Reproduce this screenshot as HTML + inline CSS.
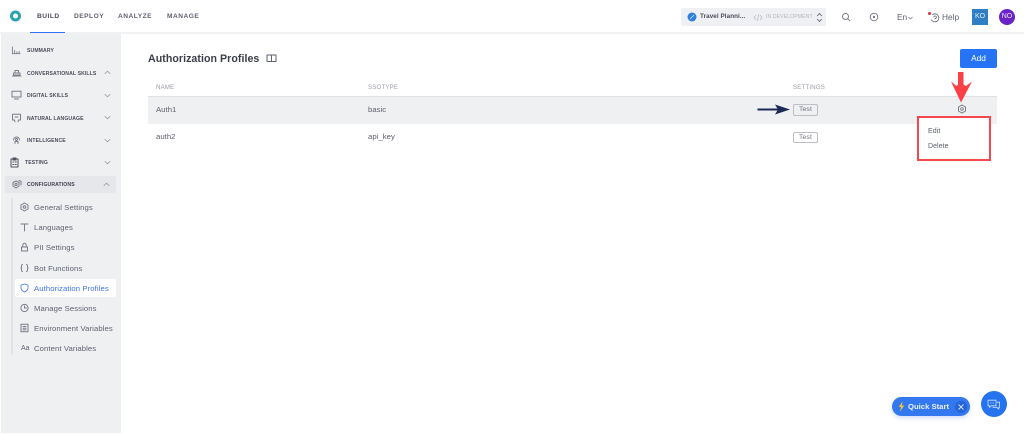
<!DOCTYPE html>
<html lang="en">
<head>
<meta charset="utf-8">
<title>Authorization Profiles</title>
<style>
html,body{margin:0;padding:0;background:#fff}
#p{position:relative;width:1024px;height:434px;overflow:hidden;background:#fff;font-family:"Liberation Sans",sans-serif;color:#3f4250;filter:blur(.3px)}
#p div,#p svg{position:absolute}
.t{white-space:nowrap;line-height:12px}
.nav{top:11px;font-size:6.6px;font-weight:bold;letter-spacing:.5px;color:#5f6270}
.sec{left:27px;font-size:5.1px;font-weight:bold;color:#4a4d5a;letter-spacing:.12px}
.sub{left:34px;font-size:7.7px;color:#5f6270;letter-spacing:.1px}
.hd{top:81.5px;font-size:6.1px;color:#9a9ca6;letter-spacing:.2px}
.cell{font-size:7.7px;color:#5c5f6b;letter-spacing:.05px}
.ic{fill:none;stroke:#7a7d8a;stroke-width:1;stroke-linecap:round;stroke-linejoin:round}
.btn{left:793px;width:23px;height:9.5px;border:1px solid #bcbec4;border-radius:2px;font-size:6.8px;line-height:9.5px;text-align:center;color:#6d7080;letter-spacing:.15px}
</style>
</head>
<body>
<div id="p">
  <!-- header -->
  <div style="left:0;top:32px;width:1024px;height:2px;background:#f1f2f4"></div>
  <svg style="left:9px;top:9px" width="14" height="14" viewBox="0 0 14 14"><circle cx="6.5" cy="7" r="4" fill="none" stroke="#2aa3ac" stroke-width="3"/></svg>
  <div class="t nav" style="left:37px;color:#4a4d5a">BUILD</div>
  <div class="t nav" style="left:74px">DEPLOY</div>
  <div class="t nav" style="left:118px">ANALYZE</div>
  <div class="t nav" style="left:167px">MANAGE</div>
  <div style="left:30px;top:32px;width:35px;height:1px;background:#2f73f0"></div>

  <div style="left:681px;top:8px;width:145px;height:18px;background:#eff0f3;border-radius:2px"></div>
  <svg style="left:687px;top:12px" width="10" height="10" viewBox="0 0 10 10"><circle cx="5" cy="5" r="4.5" fill="#2f7fdc"/><path d="M3 7 7 3" stroke="#cfe3fa" stroke-width=".8"/></svg>
  <div class="t" style="left:700px;top:11px;font-size:6.3px;font-weight:bold;color:#4a4d5a;letter-spacing:.08px">Travel Planni...</div>
  <svg style="left:753px;top:13px" width="10" height="9" viewBox="0 0 10 9"><path d="M3 2 1 4.5 3 7M7 2 9 4.5 7 7M5.8 1 4.2 8" fill="none" stroke="#b9bbc3" stroke-width=".7"/></svg>
  <div class="t" style="left:766px;top:11px;font-size:5.1px;color:#b3b5bc;letter-spacing:.12px">IN DEVELOPMENT</div>
  <svg style="left:815.5px;top:12px" width="7" height="11" viewBox="0 0 7 11"><path d="M1.2 4 3.5 1.500 5.800 4M1.200 7 3.500 9.500 5.800 7" fill="none" stroke="#5f6270" stroke-width=".9"/></svg>
  <svg style="left:841px;top:12px" width="10" height="10" viewBox="0 0 10 10"><circle cx="4.500" cy="4.500" r="3" class="ic"/><path d="M6.800 6.800 8.800 8.800" class="ic"/></svg>
  <svg style="left:869px;top:12px" width="10" height="10" viewBox="0 0 10 10"><circle cx="5" cy="5" r="3.800" class="ic"/><circle cx="5" cy="5" r="1.100" fill="#6d7080"/></svg>
  <div class="t" style="left:897px;top:11px;font-size:8.300px;color:#5f6270">En</div>
  <svg style="left:908px;top:16px" width="5" height="4" viewBox="0 0 5 4"><path d="M.5 1 2.500 3 4.500 1" fill="none" stroke="#6d7080" stroke-width=".7"/></svg>
  <div style="left:928px;top:12px;width:3px;height:3px;border-radius:50%;background:#e0303a"></div>
  <svg style="left:930px;top:12.500px" width="10" height="10" viewBox="0 0 10 10"><path d="M2 2A4 4 0 1 1 1.200 6.500" fill="none" stroke="#5f6270" stroke-width=".8"/><path d="M3.800 4A1.300 1.300 0 1 1 5 5.500V6.200M5 7.400V7.500" fill="none" stroke="#5f6270" stroke-width=".7"/></svg>
  <div class="t" style="left:942px;top:11px;font-size:8.300px;color:#5f6270">Help</div>
  <div style="left:972px;top:9px;width:16px;height:16px;background:#2f7fc4;color:#e6f0fa;font-size:7px;line-height:16px;text-align:center">KO</div>
  <div style="left:999px;top:9px;width:16px;height:16px;border-radius:50%;background:#6a22c9;color:#efe5fc;font-size:7px;line-height:16px;text-align:center">NO</div>

  <!-- sidebar -->
  <div style="left:1px;top:33px;width:120px;height:400px;background:#eff0f2"></div>
  <div style="left:5px;top:176px;width:111px;height:17px;background:#e6e7ea;border-radius:2px"></div>
  <div style="left:11px;top:198px;width:2px;height:157px;background:#e2e3e6"></div>
  <div style="left:15px;top:279px;width:101px;height:18px;background:#fff;border-radius:2px"></div>

  <svg style="left:11px;top:46px" width="10" height="9" viewBox="0 0 11 10"><path d="M1.500 1V8.500H10M4 8V5M6.500 8V6.500M9 8V6" class="ic" stroke-width=".8"/></svg>
  <div class="t sec" style="top:45px">SUMMARY</div>

  <svg style="left:11px;top:68px" width="11" height="10" viewBox="0 0 11 10"><path d="M4 2.500H7.500V5H4ZM2.500 5H9V7H2.500ZM1.500 8H10" class="ic" stroke-width=".9"/></svg>
  <div class="t sec" style="top:67.500px">CONVERSATIONAL SKILLS</div>
  <svg style="left:104px;top:70px" width="7" height="5" viewBox="0 0 7 5"><path d="M.7 3.800 3.500 1.200 6.300 3.800" fill="none" stroke="#8d8f99" stroke-width=".7"/></svg>

  <svg style="left:11px;top:90px" width="11" height="10" viewBox="0 0 11 10"><path d="M1 1.200H10V7H1ZM3.500 9H7.500" class="ic"/></svg>
  <div class="t sec" style="top:90px">DIGITAL SKILLS</div>
  <svg style="left:104px;top:93px" width="7" height="5" viewBox="0 0 7 5"><path d="M.7 1.200 3.500 3.800 6.300 1.200" fill="none" stroke="#8d8f99" stroke-width=".7"/></svg>

  <svg style="left:11px;top:113px" width="11" height="10" viewBox="0 0 11 10"><path d="M1.500 1.200H9.500V7H7.500L7 8.800M1.500 7V1.200M1.500 7H3.500L4 8.800M4 4H7" class="ic" stroke-width=".8"/></svg>
  <div class="t sec" style="top:112.500px">NATURAL LANGUAGE</div>
  <svg style="left:104px;top:115px" width="7" height="5" viewBox="0 0 7 5"><path d="M.7 1.200 3.500 3.800 6.300 1.200" fill="none" stroke="#8d8f99" stroke-width=".7"/></svg>

  <svg style="left:11px;top:135px" width="11" height="10" viewBox="0 0 11 10"><path d="M2.500 5A3 3 0 1 1 8.500 5M4 8.500V6.500H7V8.500" class="ic" stroke-width=".8"/><circle cx="5.500" cy="4.500" r="1" class="ic" stroke-width=".7"/></svg>
  <div class="t sec" style="top:135px">INTELLIGENCE</div>
  <svg style="left:104px;top:138px" width="7" height="5" viewBox="0 0 7 5"><path d="M.7 1.200 3.500 3.800 6.300 1.200" fill="none" stroke="#8d8f99" stroke-width=".7"/></svg>

  <svg style="left:9px;top:157px" width="11" height="11" viewBox="0 0 11 11"><path d="M2 2H9V10H2ZM4 1H7V3H4ZM3.800 5H4.500M6 5H7.300M3.800 7.500H4.500M6 7.500H7.300" class="ic" style="stroke:#4f525f"/></svg>
  <div class="t sec" style="left:25px;top:157px">TESTING</div>
  <svg style="left:104px;top:160px" width="7" height="5" viewBox="0 0 7 5"><path d="M.7 1.200 3.500 3.800 6.300 1.200" fill="none" stroke="#8d8f99" stroke-width=".7"/></svg>

  <svg style="left:11px;top:179px" width="11" height="11" viewBox="0 0 11 11"><path d="M5 2 8 3.500V7L5 9 2 7V3.500ZM8 1.500 10 2.500V6" class="ic" stroke-width=".9"/><circle cx="5" cy="5.500" r="1.100" class="ic" stroke-width=".8"/></svg>
  <div class="t sec" style="top:179px;color:#3f4250">CONFIGURATIONS</div>
  <svg style="left:103px;top:182px" width="7" height="5" viewBox="0 0 7 5"><path d="M.7 3.800 3.500 1.200 6.300 3.800" fill="none" stroke="#8d8f99" stroke-width=".7"/></svg>

  <svg style="left:20px;top:202px" width="9" height="10" viewBox="0 0 9 10"><path d="M4.500 1 8 3V7L4.500 9 1 7V3Z" class="ic" stroke-width=".8"/><circle cx="4.500" cy="5" r="1.300" class="ic" stroke-width=".8"/></svg>
  <div class="t sub" style="top:201.500px">General Settings</div>

  <svg style="left:20px;top:222px" width="9" height="10" viewBox="0 0 9 10"><path d="M1 2H8M4.500 2V9" class="ic" stroke-width=".8"/></svg>
  <div class="t sub" style="top:221.500px">Languages</div>

  <svg style="left:20px;top:242px" width="9" height="10" viewBox="0 0 9 10"><path d="M1.500 5H7.500V9H1.500ZM2.800 5V3A1.700 1.700 0 0 1 6.200 3V5" class="ic" stroke-width=".8"/></svg>
  <div class="t sub" style="top:241.500px">PII Settings</div>

  <svg style="left:20px;top:263px" width="9" height="10" viewBox="0 0 9 10"><path d="M2.500 1.500C1.500 1.500 1.500 2.200 1.500 3.500S1 5 .8 5C1 5 1.500 5.200 1.500 6.500S1.500 8.500 2.500 8.500M6.500 1.500C7.500 1.500 7.500 2.200 7.500 3.500S8 5 8.200 5C8 5 7.500 5.200 7.500 6.500S7.500 8.500 6.500 8.500" class="ic" stroke-width=".8"/></svg>
  <div class="t sub" style="top:262.500px">Bot Functions</div>

  <svg style="left:20px;top:283px" width="9" height="10" viewBox="0 0 9 10"><path d="M4.500 1 8 2V5C8 7 6 8.500 4.500 9 3 8.500 1 7 1 5V2Z" fill="none" stroke="#3f74ee" stroke-width=".8"/></svg>
  <div class="t sub" style="top:282.500px;color:#3f74ee">Authorization Profiles</div>

  <svg style="left:20px;top:303px" width="9" height="10" viewBox="0 0 9 10"><circle cx="4.500" cy="5" r="3.600" class="ic" stroke-width=".8"/><path d="M4.500 3V5H6.500" class="ic" stroke-width=".8"/></svg>
  <div class="t sub" style="top:302.500px">Manage Sessions</div>

  <svg style="left:20px;top:323px" width="9" height="10" viewBox="0 0 9 10"><path d="M1 1.200H8V8.800H1ZM3 3.500H6M3 5.200H6M3 6.900H6" class="ic" stroke-width=".8"/></svg>
  <div class="t sub" style="top:322.500px">Environment Variables</div>

  <div class="t" style="left:21px;top:343px;font-size:7px;color:#5f6270">Aa</div>
  <div class="t sub" style="top:343px">Content Variables</div>

  <!-- main -->
  <div class="t" style="left:148px;top:52.500px;font-size:10.600px;font-weight:bold;color:#3a3d4a;letter-spacing:.06px">Authorization Profiles</div>
  <svg style="left:266px;top:54px" width="11" height="9" viewBox="0 0 11 9"><path d="M1 1H5L5.500 1.500 6 1H10V7.500H1ZM5.500 1.500V7.500" class="ic" style="stroke:#5f6270" stroke-width=".8"/></svg>
  <div style="left:960px;top:49px;width:37px;height:19px;background:#2673f5;border-radius:2px;color:#fff;font-size:8.300px;line-height:19px;text-align:center">Add</div>

  <div class="t hd" style="left:156px">NAME</div>
  <div class="t hd" style="left:368px">SSOTYPE</div>
  <div class="t hd" style="left:793px">SETTINGS</div>

  <div style="left:148px;top:96px;width:849px;height:1px;background:#dfe0e3"></div>
  <div style="left:148px;top:97px;width:849px;height:27px;background:#eff0f2"></div>

  <div class="t cell" style="left:156px;top:104px">Auth1</div>
  <div class="t cell" style="left:368px;top:104px">basic</div>
  <div class="t cell" style="left:156px;top:131px">auth2</div>
  <div class="t cell" style="left:368px;top:131px">api_key</div>

  <div class="btn" style="top:104px;background:#eff0f2">Test</div>
  <div class="btn" style="top:131.500px;background:#fff">Test</div>

  <svg style="left:756px;top:103px" width="35" height="13" viewBox="0 0 35 13"><path d="M1.500 6.500H24" stroke="#1c2a55" stroke-width="2" fill="none"/><path d="M19 1.500 34 6.500 19 11.500 22 6.500Z" fill="#1c2a55"/></svg>

  <svg style="left:956.500px;top:104px" width="10" height="10" viewBox="0 0 10 10"><path d="M5 1 8.500 3V7L5 9 1.500 7V3Z" fill="none" stroke="#7a7d89" stroke-width="1"/><circle cx="5" cy="5" r="1.300" fill="none" stroke="#7a7d89" stroke-width=".9"/></svg>
  <svg style="left:950px;top:71px" width="23" height="32" viewBox="0 0 23 32"><path d="M8 1H13.500V13.500L16 15 22 10.500 11 31.500 1 10.500 6.500 15 8 13.500Z" fill="#fb3f47"/></svg>

  <div style="left:917px;top:116px;width:70px;height:41px;background:#fff;border:2px solid #f5484e"></div>
  <div class="t" style="left:928px;top:126px;font-size:7px;color:#5f6270;letter-spacing:.1px">Edit</div>
  <div class="t" style="left:928px;top:140.500px;font-size:7px;color:#5f6270;letter-spacing:.05px">Delete</div>

  <!-- bottom right -->
  <div style="left:892px;top:397px;width:78px;height:19px;border-radius:10px;background:#3478f0;box-shadow:0 2px 5px rgba(50,100,220,.22)"></div>
  <svg style="left:898px;top:401px" width="7" height="11" viewBox="0 0 7 11"><path d="M4.500 .5 .8 6H3L2 10.500 6.200 4.500H3.800Z" fill="#f4c430"/></svg>
  <div class="t" style="left:908px;top:400.500px;font-size:7.700px;font-weight:bold;color:#e8f0ff">Quick Start</div>
  <div style="left:955px;top:400.500px;width:12px;height:12px;border-radius:50%;background:#2563d8"></div>
  <svg style="left:957px;top:402.500px" width="8" height="8" viewBox="0 0 8 8"><path d="M1.500 1.500 6.500 6.500M6.500 1.500 1.500 6.500" stroke="#d6e3fb" stroke-width=".9"/></svg>
  <div style="left:981px;top:391px;width:26px;height:26px;border-radius:50%;background:#2673f0"></div>
  <svg style="left:987px;top:398.500px" width="14" height="12" viewBox="0 0 17 15"><path d="M1 1.500H11V8.500H5L3 10.500V8.500H1Z" fill="none" stroke="#cfe0fb" stroke-width="1"/><path d="M12 4H15.500V10.500H14.500V12.500L12 10.500H7.500V9.500" fill="none" stroke="#cfe0fb" stroke-width="1"/><path d="M3.500 5H8.500" stroke="#cfe0fb" stroke-width="1" stroke-dasharray="1 1"/></svg>
</div>
</body>
</html>
